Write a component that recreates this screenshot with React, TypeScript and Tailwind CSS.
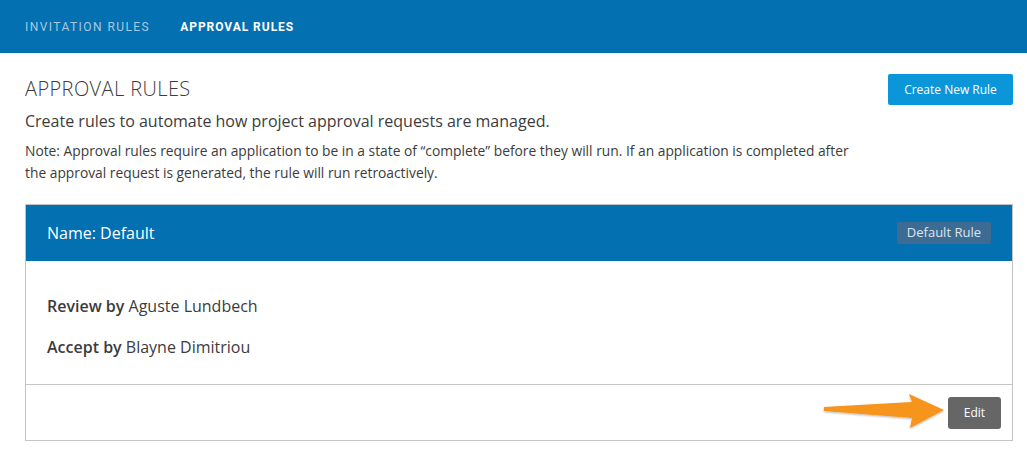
export default function App() {
  return (
    <div className="min-h-screen bg-white text-[#3c3c3c]" style={{ fontFamily: '"Open Sans", "Noto Sans", sans-serif' }}>
      {/* Tabs */}
      <div className="h-[53px] bg-[#0270b1] flex items-center px-[25px] gap-[30px] text-[12px]" style={{ fontFamily: 'Roboto, sans-serif' }}>
        <span className="text-[#a9c8e2] tracking-[0.12em]">INVITATION RULES</span>
        <span className="text-white font-bold tracking-[0.08em]">APPROVAL RULES</span>
      </div>

      <div className="px-[25px] pt-[21px] pr-[14px]">
        <div className="flex items-start justify-between">
          <div>
            <h1 className="text-[20px] font-light tracking-[0.02em] leading-[28px] mt-[1px]">APPROVAL RULES</h1>
            <p className="text-[16px] mt-[6px] leading-[24px]">Create rules to automate how project approval requests are managed.</p>
            <p className="text-[13.8px] mt-[7px] leading-[22px] max-w-[848px]">
              Note: Approval rules require an application to be in a state of “complete” before they will run. If an application is completed after the approval request is generated, the rule will run retroactively.
            </p>
          </div>
          <button className="bg-[#0a96d8] text-white text-[12px] h-[31px] w-[125px] rounded-[2px] shrink-0">Create New Rule</button>
        </div>

        {/* Rule card */}
        <div className="mt-[20px] border border-[#c4c4c4]">
          <div className="h-[56px] bg-[#0270b1] flex items-center justify-between pl-[21px] pr-[21px]">
            <span className="text-white text-[16px]">Name: Default</span>
            <span className="bg-[#3c6b93] text-[#dde6ee] text-[13px] h-[22px] px-[10px] flex items-center rounded-[2px]">Default Rule</span>
          </div>
          <div className="px-[21px] pt-[33px] pb-[25px] text-[16px] flex flex-col gap-[17px]">
            <div><span className="font-semibold">Review by</span> Aguste Lundbech</div>
            <div><span className="font-semibold">Accept by</span> Blayne Dimitriou</div>
          </div>
          <div className="border-t border-[#c4c4c4] h-[56px] flex items-center justify-end pr-[11px] relative">
            <svg className="absolute left-[796px] top-[8px]" width="126" height="40" viewBox="0 0 126 40">
              <defs>
                <filter id="sh" x="-10%" y="-20%" width="120%" height="150%">
                  <feDropShadow dx="0" dy="1" stdDeviation="1" floodColor="#000" floodOpacity="0.3" />
                </filter>
              </defs>
              <path d="M2,14 L90,9 L87,1 L122,17 L88,35 L90,25 L2,18 Z" fill="#f7941d" filter="url(#sh)" />
            </svg>
            <button className="bg-[#666] text-white text-[12px] h-[32px] w-[53px] rounded-[3px]">Edit</button>
          </div>
        </div>
      </div>
    </div>
  );
}
